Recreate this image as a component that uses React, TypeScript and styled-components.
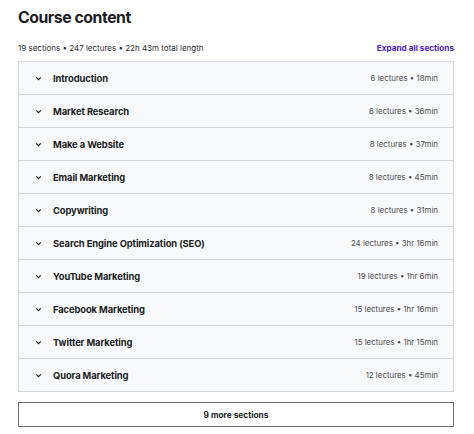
import React from 'react'
import styled, { createGlobalStyle } from 'styled-components'

const Global = createGlobalStyle`
  body {
    margin: 0;
    background: #ffffff;
    font-family: Inter, "Noto Sans", sans-serif;
    color: #1c1d1f;
  }
`

const Page = styled.div`
  padding: 6px 20px 0 18px;
  width: 474px;
  box-sizing: border-box;
`

const Title = styled.h2`
  margin: 0;
  font-size: 15.8px;
  font-weight: 700;
  letter-spacing: -0.45px;
  line-height: 24px;
`

const Meta = styled.div`
  display: flex;
  justify-content: space-between;
  align-items: center;
  margin-top: 13px;
  margin-bottom: 8px;
  font-size: 8px;
  color: #2d2f31;
`

const Expand = styled.span`
  color: #5022c3;
  font-weight: 700;
  font-size: 8.2px;
`

const List = styled.div`
  border: 1px solid #d1d7dc;
  display: flex;
  flex-direction: column;
`

const Row = styled.div`
  display: flex;
  align-items: center;
  height: 32px;
  padding: 0 15px 0 15px;
  background: #f7f9fa;
  border-top: 1px solid #d1d7dc;
  &:first-child {
    border-top: none;
  }
`

const Chevron = styled.svg`
  width: 9px;
  height: 9px;
  margin-right: 10px;
`

const Name = styled.span`
  flex: 1;
  font-size: 9.4px;
  font-weight: 700;
  letter-spacing: -0.1px;
  color: #1c1d1f;
`

const Info = styled.span`
  font-size: 7.9px;
  color: #4a4c4f;
`

const MoreButton = styled.button`
  display: block;
  width: 100%;
  margin-top: 10px;
  height: 25px;
  border: 1px solid #6a6f73;
  background: #ffffff;
  font-family: inherit;
  font-size: 8.3px;
  font-weight: 700;
  color: #1c1d1f;
`

const sections: [string, string][] = [
  ['Introduction', '6 lectures • 18min'],
  ['Market Research', '6 lectures • 36min'],
  ['Make a Website', '8 lectures • 37min'],
  ['Email Marketing', '8 lectures • 45min'],
  ['Copywriting', '8 lectures • 31min'],
  ['Search Engine Optimization (SEO)', '24 lectures • 3hr 16min'],
  ['YouTube Marketing', '19 lectures • 1hr 6min'],
  ['Facebook Marketing', '15 lectures • 1hr 16min'],
  ['Twitter Marketing', '15 lectures • 1hr 15min'],
  ['Quora Marketing', '12 lectures • 45min'],
]

export default function App() {
  return (
    <Page>
      <Global />
      <Title>Course content</Title>
      <Meta>
        <span>19 sections • 247 lectures • 22h 43m total length</span>
        <Expand>Expand all sections</Expand>
      </Meta>
      <List>
        {sections.map(([name, info]) => (
          <Row key={name}>
            <Chevron viewBox="0 0 10 10">
              <path d="M2.5 3.8 L5 6.2 L7.5 3.8" fill="none" stroke="#1c1d1f" strokeWidth="1.4" />
            </Chevron>
            <Name>{name}</Name>
            <Info>{info}</Info>
          </Row>
        ))}
      </List>
      <MoreButton>9 more sections</MoreButton>
    </Page>
  )
}
